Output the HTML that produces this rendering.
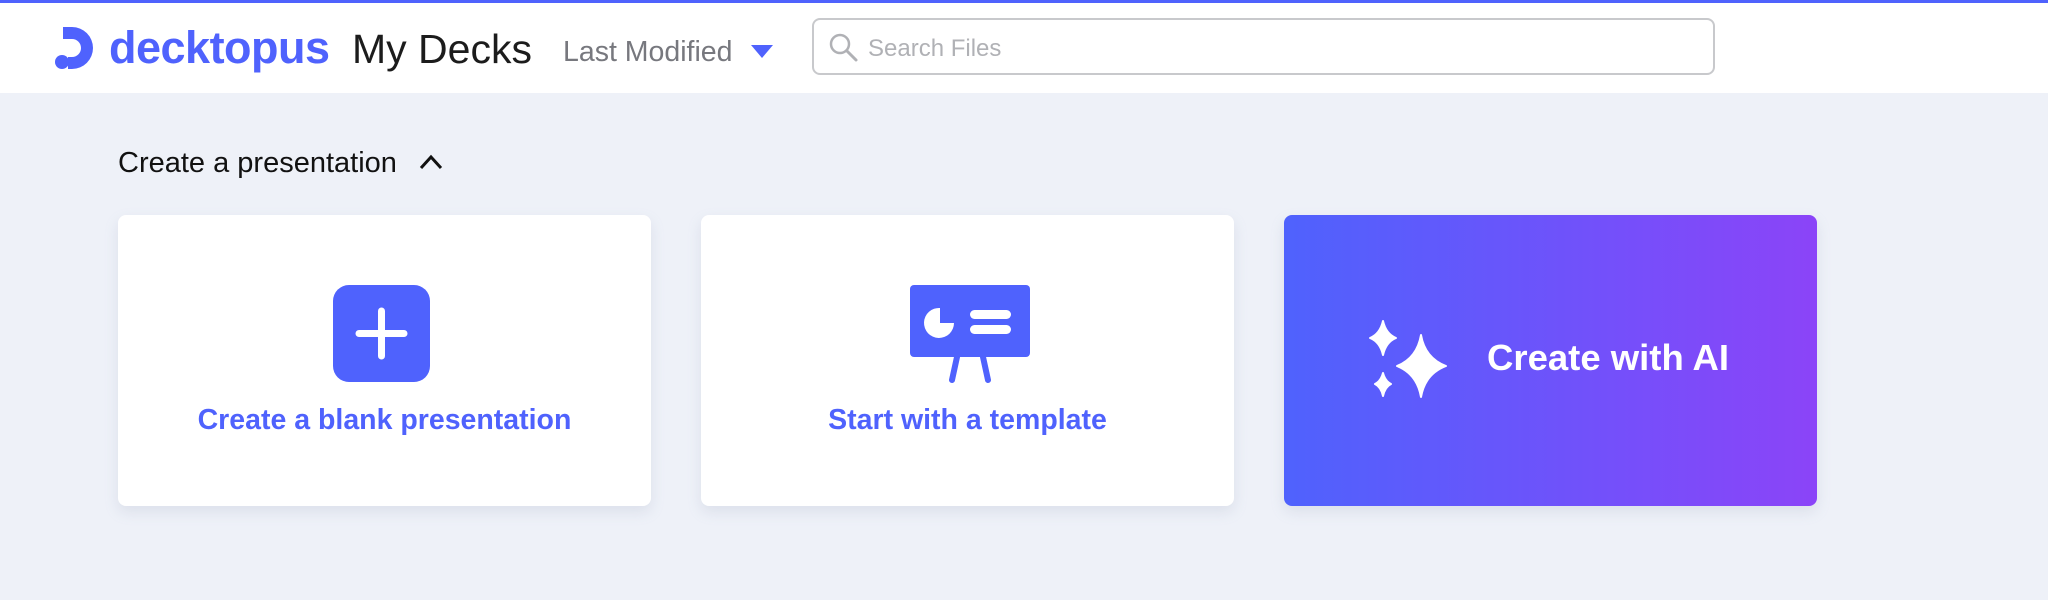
<!DOCTYPE html>
<html><head><style>
*{margin:0;padding:0;box-sizing:border-box}
body{width:2048px;height:600px;background:#eef1f8;font-family:"Liberation Sans",sans-serif;position:relative;overflow:hidden}
.hdr{position:absolute;left:0;top:0;width:2048px;height:93px;background:#fff;border-top:3px solid #4f62fd}
.a{position:absolute;white-space:nowrap}
.card{position:absolute;top:215px;width:533px;height:291px;background:#fff;border-radius:8px;box-shadow:0 6px 14px rgba(140,150,180,.18)}
.ct{position:absolute;left:0;right:0;text-align:center;font-weight:bold;font-size:28.5px;color:#4f62fd}
</style></head><body>
<div class="hdr"></div>
<svg class="a" style="left:52px;top:24px" width="46" height="50" viewBox="52 24 46 50">
<path d="M63 27 H72 A21 21 0 0 1 72 69 H68 V57 H72 A9 9 0 0 0 72 39 H63 Z" fill="#4f62fd"/>
<circle cx="62" cy="62" r="7" fill="#4f62fd"/>
</svg>
<div class="a" style="left:109px;top:22px;font-size:45px;font-weight:bold;color:#4f62fd;letter-spacing:-0.5px">decktopus</div>
<div class="a" style="left:352px;top:26px;font-size:41px;color:#1c1c1c">My Decks</div>
<div class="a" style="left:563px;top:36px;font-size:28.5px;color:#77787e">Last Modified</div>
<svg class="a" style="left:751px;top:45px" width="22" height="14"><path d="M0 0H22L11 13Z" fill="#4f62fd"/></svg>
<div class="a" style="left:812px;top:18px;width:903px;height:57px;border:2px solid #c8c9cc;border-radius:8px;background:#fff"></div>
<svg class="a" style="left:828px;top:32px" width="32" height="32"><circle cx="12" cy="12" r="9" fill="none" stroke="#b0b1b5" stroke-width="2.5"/><path d="M19 19L28 28" stroke="#b0b1b5" stroke-width="3" stroke-linecap="round"/></svg>
<div class="a" style="left:868px;top:35px;font-size:24px;color:#b0b1b5">Search Files</div>
<div class="a" style="left:118px;top:147px;font-size:29px;color:#111">Create a presentation</div>
<svg class="a" style="left:418px;top:153px" width="26" height="18"><path d="M3 15L13 4L23 15" fill="none" stroke="#111" stroke-width="3"/></svg>
<div class="card" style="left:118px">
<svg class="a" style="left:215px;top:70px" width="97" height="97"><rect width="97" height="97" rx="16" fill="#4f62fd"/><path d="M48.5 26V71M26 48.5H71" stroke="#fff" stroke-width="7" stroke-linecap="round"/></svg>
<div class="ct" style="top:189px">Create a blank presentation</div>
</div>
<div class="card" style="left:701px">
<svg class="a" style="left:209px;top:70px" width="120" height="98"><rect x="0" y="0" width="120" height="72" rx="4" fill="#4f62fd"/>
<path d="M30 23 A15 15 0 1 0 44 38 H30 Z" fill="#fff"/>
<rect x="60" y="25" width="41" height="9" rx="4.5" fill="#fff"/><rect x="60" y="40" width="41" height="9" rx="4.5" fill="#fff"/>
<path d="M47 72L42 95M73 72L78 95" stroke="#4f62fd" stroke-width="6" stroke-linecap="round"/></svg>
<div class="ct" style="top:189px">Start with a template</div>
</div>
<div class="card" style="left:1284px;background:linear-gradient(90deg,#4f62fd,#8b44f8)">
<svg class="a" style="left:80px;top:103px" width="92" height="92" viewBox="0 0 92 92">
<path d="M19 3 Q22 16 32 20 Q22 24 19 37 Q16 24 6 20 Q16 16 19 3Z" fill="#fff" stroke="#fff" stroke-width="2" stroke-linejoin="round"/>
<path d="M57 17 Q61 40 82 48 Q61 56 57 79 Q53 56 33 48 Q53 40 57 17Z" fill="#fff" stroke="#fff" stroke-width="2" stroke-linejoin="round"/>
<path d="M19 55 Q21 63 27 66 Q21 69 19 78 Q17 69 11 66 Q17 63 19 55Z" fill="#fff" stroke="#fff" stroke-width="2" stroke-linejoin="round"/>
</svg>
<div class="a" style="left:203px;top:122px;font-size:36.5px;font-weight:bold;color:#fff">Create with AI</div>
</div>
</body></html>
